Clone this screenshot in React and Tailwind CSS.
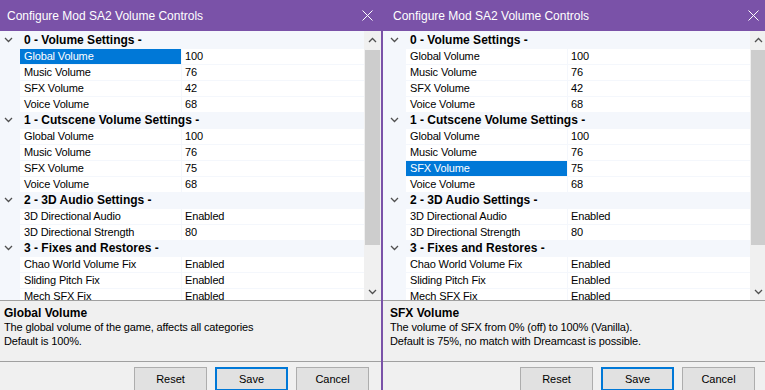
import React from 'react';

const sections = [
  {
    name: '0 - Volume Settings -',
    rows: [
      ['Global Volume', '100'],
      ['Music Volume', '76'],
      ['SFX Volume', '42'],
      ['Voice Volume', '68'],
    ],
  },
  {
    name: '1 - Cutscene Volume Settings -',
    rows: [
      ['Global Volume', '100'],
      ['Music Volume', '76'],
      ['SFX Volume', '75'],
      ['Voice Volume', '68'],
    ],
  },
  {
    name: '2 - 3D Audio Settings -',
    rows: [
      ['3D Directional Audio', 'Enabled'],
      ['3D Directional Strength', '80'],
    ],
  },
  {
    name: '3 - Fixes and Restores -',
    rows: [
      ['Chao World Volume Fix', 'Enabled'],
      ['Sliding Pitch Fix', 'Enabled'],
      ['Mech SFX Fix', 'Enabled'],
      ['Omochao Fix', 'Enabled'],
    ],
  },
];

function Chevron({ up }) {
  return (
    <svg width="9" height="6" viewBox="0 0 9 6">
      <polyline
        points={up ? '1,5 4.5,1.5 8,5' : '1,1 4.5,4.5 8,1'}
        fill="none"
        stroke="#505050"
        strokeWidth="1.3"
      />
    </svg>
  );
}

function Window({ left, selected, desc }) {
  return (
    <div className={left ? 'w-[381px] h-[390px] overflow-hidden' : 'w-[382px] h-[390px] overflow-hidden'}>
      <div className={left ? 'w-[384px] -ml-[3px] h-[390px] flex flex-col bg-[#f0f0f0]' : 'w-[384px] h-[390px] flex flex-col bg-[#f0f0f0]'}>
        {/* title bar */}
        <div className="h-[31px] shrink-0 bg-[#7a52a8] flex items-center justify-between pl-[10px] pr-[8px] text-white text-[12px]">
          <span>Configure Mod SA2 Volume Controls</span>
          <svg width="11" height="11" viewBox="0 0 11 11">
            <path d="M0.5 0.5 L10.5 10.5 M10.5 0.5 L0.5 10.5" stroke="white" strokeWidth="1" />
          </svg>
        </div>

        {/* property grid */}
        <div className="h-[270px] shrink-0 flex border-b border-[#a0a0a0]">
          <div className="flex-1 flex flex-col bg-[#f4f7fc] pt-px overflow-hidden">
            {sections.map((sec, si) => (
              <React.Fragment key={si}>
                <div className="h-[16px] shrink-0 flex items-center">
                  <div className="w-[23px] pl-[7px] flex items-center">
                    <Chevron />
                  </div>
                  <span className="pl-[4px] font-bold text-[12px] text-black">{sec.name}</span>
                </div>
                {sec.rows.map(([label, value], ri) => {
                  const isSel = selected === `${si}-${ri}`;
                  return (
                    <div key={ri} className="h-[16px] shrink-0 pt-px flex text-[11px] tracking-[-0.15px]">
                      <div className="w-[23px]" />
                      <div
                        className={
                          isSel
                            ? 'w-[161px] h-[15px] bg-[#0078d7] text-white pl-[4px] leading-[15px] whitespace-nowrap overflow-hidden'
                            : 'w-[161px] h-[15px] bg-white text-black pl-[4px] leading-[15px] whitespace-nowrap overflow-hidden'
                        }
                      >
                        {label}
                      </div>
                      <div className="w-px" />
                      <div className="flex-1 h-[15px] bg-white text-black pl-[3px] leading-[15px]">{value}</div>
                    </div>
                  );
                })}
              </React.Fragment>
            ))}
          </div>
          {/* scrollbar */}
          <div className="w-[17px] shrink-0 bg-[#f0f0f0] flex flex-col">
            <div className="h-[17px] flex items-center justify-center">
              <Chevron up />
            </div>
            <div className="h-[195px] mt-[2px] mx-px bg-[#cdcdcd]" />
            <div className="flex-1" />
            <div className="h-[17px] flex items-center justify-center">
              <Chevron />
            </div>
          </div>
        </div>

        {/* description */}
        <div className="h-[61px] shrink-0 border-b border-[#a0a0a0] pl-[7px] pt-[5px] text-black">
          <div className="font-bold text-[12px] leading-[15px]">{desc.title}</div>
          <div className="text-[11px] tracking-[-0.15px] leading-[13.5px]">{desc.line1}</div>
          <div className="text-[11px] tracking-[-0.15px] leading-[13.5px]">{desc.line2}</div>
        </div>

        {/* buttons */}
        <div className="flex justify-end gap-[8px] pr-[12px] pt-[5px]">
          <button className="w-[73px] h-[24px] bg-[#e1e1e1] border border-[#adadad] text-[11px] text-black">Reset</button>
          <button className="w-[73px] h-[24px] bg-[#e1e1e1] border-2 border-[#0078d7] text-[11px] text-black">Save</button>
          <button className="w-[73px] h-[24px] bg-[#e1e1e1] border border-[#adadad] text-[11px] text-black">Cancel</button>
        </div>
      </div>
    </div>
  );
}

export default function App() {
  return (
    <div className="w-[765px] h-[390px] overflow-hidden flex font-['Liberation_Sans',Arial,sans-serif] bg-[#f0f0f0]">
      <Window
        left
        selected="0-0"
        desc={{
          title: 'Global Volume',
          line1: 'The global volume of the game, affects all categories',
          line2: 'Default is 100%.',
        }}
      />
      <div className="w-[2px] h-[390px] bg-[#7a52a8]" />
      <Window
        selected="1-2"
        desc={{
          title: 'SFX Volume',
          line1: 'The volume of SFX from 0% (off) to 100% (Vanilla).',
          line2: 'Default is 75%, no match with Dreamcast is possible.',
        }}
      />
    </div>
  );
}
